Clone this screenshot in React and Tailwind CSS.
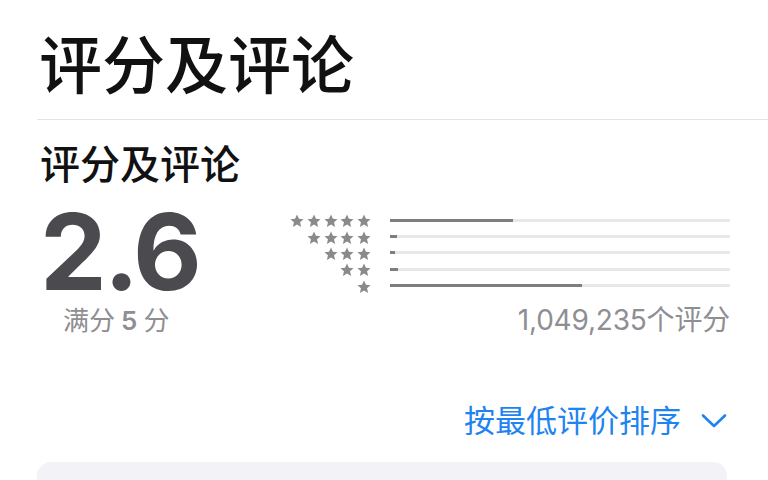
import React from 'react';

const cjk = { fontFamily: 'Inter, "Noto Sans CJK SC", sans-serif' };

const Star = () => (
  <svg width="14" height="14" viewBox="0 0 24 24" className="shrink-0">
    <polygon
      points="12,1 15.3,8.3 23.2,9 17.2,14.3 19,22.3 12,18.1 5,22.3 6.8,14.3 0.8,9 8.7,8.3"
      fill="#8a8a8e"
    />
  </svg>
);

const rows = [
  { stars: 5, pct: 36.2 },
  { stars: 4, pct: 2 },
  { stars: 3, pct: 1.5 },
  { stars: 2, pct: 2.4 },
  { stars: 1, pct: 56.5 },
];

const RatingsReviews = () => {
  return (
    <div className="w-[768px] h-[480px] overflow-hidden bg-white text-[#111]" style={cjk}>
      <h1 className="pl-[39px] pt-[34px] text-[63px] leading-none font-medium">评分及评论</h1>
      <div className="ml-[37px] mt-[22px] h-px bg-[#e3e3e6]" />

      <div className="pl-[40px] pr-[38px]">
        <h2 className="mt-[25px] text-[40px] leading-none font-medium">评分及评论</h2>

        <div className="flex mt-[14px]">
          {/* average score */}
          <div className="w-[250px] flex flex-col">
            <div className="text-[106px] leading-none font-bold text-[#4a4a4f] tracking-[-3px]">2.6</div>
            <div className="mt-[3px] ml-[23px] text-[26px] leading-none text-[#8e8e93] flex gap-[6px]">
              <span>满分</span>
              <span className="font-semibold">5</span>
              <span>分</span>
            </div>
          </div>

          {/* distribution */}
          <div className="flex-1 flex flex-col pt-[14px]">
            {rows.map((r) => (
              <div key={r.stars} className="flex items-center h-[16.4px]">
                <div className="w-[81px] flex justify-end gap-[2.7px]">
                  {Array.from({ length: r.stars }).map((_, i) => (
                    <Star key={i} />
                  ))}
                </div>
                <div className="flex-1 ml-[19px] h-[3px] bg-[#e8e8ea] -translate-y-[1px]">
                  <div className="h-full bg-[#7e7e82]" style={{ width: `${r.pct}%` }} />
                </div>
              </div>
            ))}
            <div className="mt-[11px] text-right text-[28px] leading-none text-[#8e8e93] tracking-[-0.2px]">
              1,049,235个评分
            </div>
          </div>
        </div>

        <div className="flex justify-end items-center mt-[71px] pr-[3px] text-[#1f84f0]">
          <span className="text-[31px] leading-none">按最低评价排序</span>
          <svg width="26" height="16" viewBox="0 0 26 16" className="ml-[20px]" fill="none">
            <path d="M2 2.5 L13 13 L24 2.5" stroke="currentColor" strokeWidth="2.6" strokeLinecap="round" strokeLinejoin="round" />
          </svg>
        </div>
      </div>

      <div className="ml-[37px] mr-[41px] mt-[26px] h-[60px] rounded-[14px] bg-[#f2f2f7]" />
    </div>
  );
};

export default RatingsReviews;
